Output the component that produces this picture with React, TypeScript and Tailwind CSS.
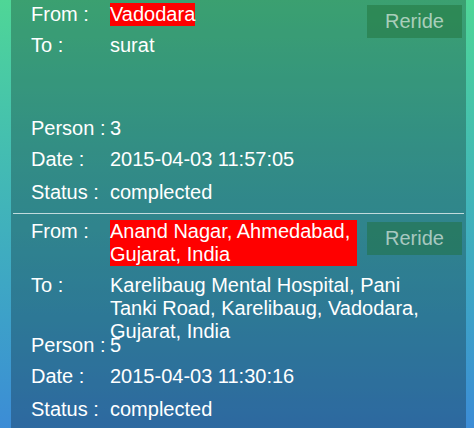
const rides = [
  {
    from: "Vadodara",
    to: "surat",
    person: 3,
    date: "2015-04-03 11:57:05",
    status: "complected",
  },
  {
    from: "Anand Nagar, Ahmedabad, Gujarat, India",
    to: "Karelibaug Mental Hospital, Pani Tanki Road, Karelibaug, Vadodara, Gujarat, India",
    person: 5,
    date: "2015-04-03 11:30:16",
    status: "complected",
  },
];

type Ride = (typeof rides)[number];

function Row({ label, children, className = "" }: { label: string; children: React.ReactNode; className?: string }) {
  return (
    <div className={`flex ${className}`}>
      <span className="w-[79px] shrink-0">{label}</span>
      <div className="min-w-0">{children}</div>
    </div>
  );
}

function RideCell({ ride }: { ride: Ride }) {
  return (
    <div className="h-[217px] flex flex-col">
      <div className="mx-[2px] h-px bg-white/70" />
      <div className="pt-[6px] pl-[20px] pr-[4px]">
        <div className="h-[114px]">
          <div className="flex justify-between items-start">
            <Row label="From :">
              <span className="inline-block max-w-[247px] bg-[#ff0000]">{ride.from}</span>
            </Row>
            <button className="mt-[2px] -mb-[12px] w-[95px] h-[33px] shrink-0 bg-[#1f6e35]/45 text-white/60 text-[20px]">
              Reride
            </button>
          </div>
          <Row label="To :" className="mt-[8px]">
            <div className="max-w-[330px]">{ride.to}</div>
          </Row>
        </div>
        <Row label="Person :" className="h-[31px]">
          {ride.person}
        </Row>
        <Row label="Date :" className="h-[33px]">
          {ride.date}
        </Row>
        <Row label="Status :" className="h-[23px]">
          {ride.status}
        </Row>
      </div>
    </div>
  );
}

export default function App() {
  return (
    <div
      className="h-[428px] w-[474px] overflow-hidden bg-gradient-to-b from-[#4fd696] to-[#3c8cd6] text-white text-[20px] leading-[23px]"
      style={{ fontFamily: '"Liberation Sans", Arial, sans-serif' }}
    >
      <div className="ml-[11px] w-[455px] h-full overflow-hidden bg-black/25">
        <div className="-mt-[4px]">
          {rides.map((ride, i) => (
            <RideCell key={i} ride={ride} />
          ))}
        </div>
      </div>
    </div>
  );
}
